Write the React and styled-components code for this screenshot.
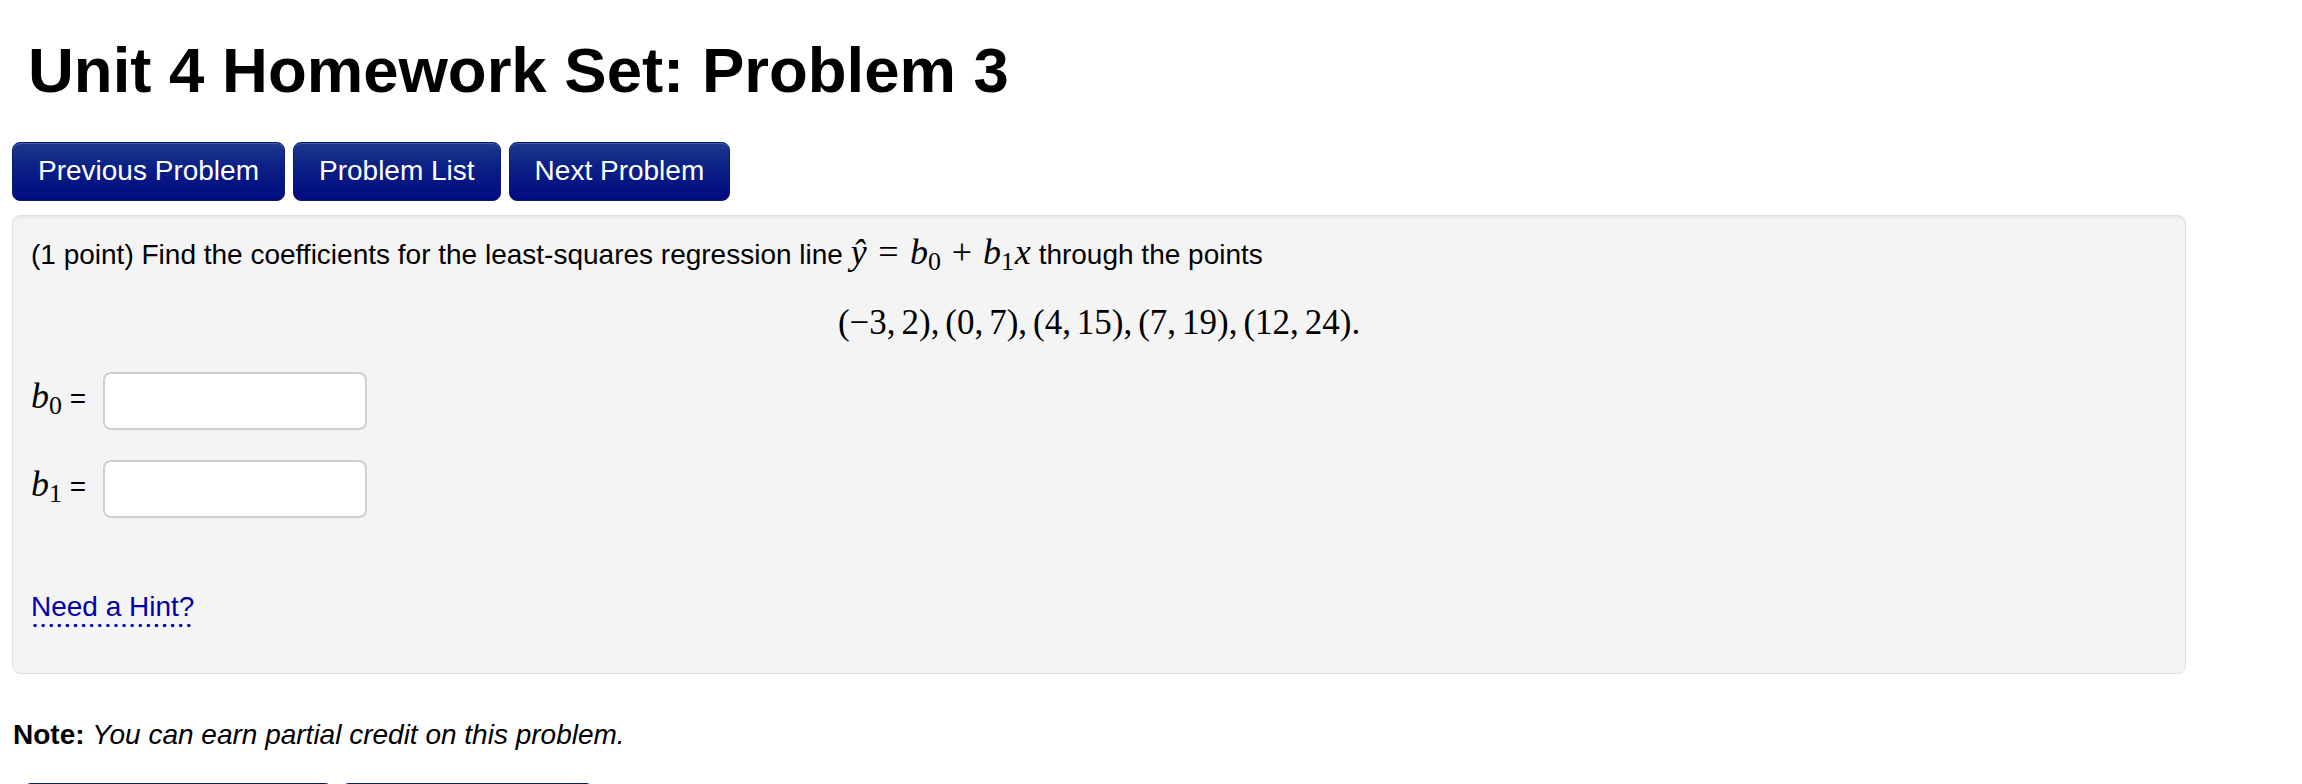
import React from "react";
import styled, { createGlobalStyle } from "styled-components";

const GlobalStyle = createGlobalStyle`
  html, body {
    margin: 0;
    padding: 0;
    background: #ffffff;
  }
  body {
    font-family: "Liberation Sans", Helvetica, Arial, sans-serif;
    color: #000000;
  }
`;

const Page = styled.div`
  width: 2174px;
  margin-left: 12px;
`;

const Title = styled.h1`
  margin: 0;
  padding: 38px 0 0 16px;
  font-size: 63.5px;
  line-height: 64px;
  font-weight: bold;
`;

const ButtonBar = styled.div`
  display: flex;
  gap: 8px;
  margin-top: ${(p) => p.$top}px;
  margin-left: ${(p) => p.$left || 0}px;
`;

const NavButton = styled.button`
  font-family: "Liberation Sans", Helvetica, Arial, sans-serif;
  font-size: 28px;
  line-height: 40px;
  padding: 8px 25px 9px;
  border: 1px solid #0b1a6e;
  border-radius: 8px;
  color: #ffffff;
  background: linear-gradient(to bottom, #1d3a8e 0%, #0c2186 40%, #000a80 100%);
  box-shadow: inset 0 1px 0 rgba(255, 255, 255, 0.18);
  cursor: pointer;
`;

const Well = styled.div`
  margin-top: 14px;
  padding: 19px 18px;
  background: #f4f4f4;
  border: 1px solid #e0e0e0;
  border-radius: 8px;
  box-shadow: inset 0 2px 2px rgba(0, 0, 0, 0.05);
  font-size: 28px;
  line-height: 40px;
`;

const Statement = styled.div`
  white-space: nowrap;
  height: 40px;
`;

const Math = styled.span`
  font-family: "Liberation Serif", "Times New Roman", serif;
  font-size: 36px;
  line-height: 0.8;
`;

const Var = styled.span`
  font-style: italic;
`;

const Op = styled.span`
  margin: 0 ${(p) => p.$gap || 0.3}em;
`;

const Sub = styled.span`
  font-size: 0.72em;
  vertical-align: -0.22em;
  line-height: 0.8;
  margin-right: ${(p) => p.$after || 0}em;
`;

const DisplayMath = styled.div`
  margin-top: 24px;
  font-family: "Liberation Serif", "Times New Roman", serif;
  font-size: 35px;
  line-height: 48px;
  text-align: center;
`;

const Comma = styled.span`
  margin-right: 0.17em;
`;

const AnswerRow = styled.div`
  display: flex;
  align-items: center;
  margin-top: ${(p) => p.$top}px;
  height: 58px;
`;

const Label = styled.span`
  padding-bottom: 5px;
  line-height: 40px;
  white-space: nowrap;
`;

const AnswerInput = styled.input`
  box-sizing: border-box;
  width: 264px;
  height: 58px;
  margin-left: 17px;
  padding: 0 10px;
  border: 2px solid #cfcfcf;
  border-radius: 8px;
  background: #ffffff;
  font-size: 28px;
  outline: none;
`;

const Hint = styled.div`
  margin-top: 69px;
  margin-bottom: 27px;
  height: 40px;
`;

const HintLink = styled.a`
  color: #0000a8;
  text-decoration: none;
  padding-bottom: 6px;
  background-image: radial-gradient(circle, #0000a8 1.6px, transparent 2px);
  background-size: 8.1px 5px;
  background-repeat: repeat-x;
  background-position: 0 100%;
  cursor: pointer;
`;

const Note = styled.div`
  margin-top: 41px;
  font-size: 28px;
  line-height: 40px;
  padding-left: 1px;
  em {
    font-style: italic;
  }
`;

const points = [
  ["\u22123", "2"],
  ["0", "7"],
  ["4", "15"],
  ["7", "19"],
  ["12", "24"],
];

function Point({ a, b, last }) {
  return (
    <>
      (<Comma>{a},</Comma>{b})
      {last ? "." : <Comma>,</Comma>}
    </>
  );
}

function Coef({ n }) {
  return (
    <AnswerRow $top={n === 0 ? 25 : 30}>
      <Label>
        <Math>
          <Var>b</Var>
          <Sub>{n}</Sub>
        </Math>{" "}
        =
      </Label>
      <AnswerInput type="text" aria-label={`b${n}`} />
    </AnswerRow>
  );
}

export default function App() {
  return (
    <>
      <GlobalStyle />
      <Page>
        <Title>Unit 4 Homework Set: Problem 3</Title>
        <ButtonBar $top={40}>
          <NavButton>Previous Problem</NavButton>
          <NavButton>Problem List</NavButton>
          <NavButton>Next Problem</NavButton>
        </ButtonBar>
        <Well>
          <Statement>
            (1 point) Find the coefficients for the least-squares regression line{" "}
            <Math>
              <Var>ŷ</Var>
              <Op $gap={0.32}>=</Op>
              <Var>b</Var>
              <Sub>0</Sub>
              <Op>+</Op>
              <Var>b</Var>
              <Sub $after={0.04}>1</Sub>
              <Var>x</Var>
            </Math>{" "}
            through the points
          </Statement>
          <DisplayMath>
            {points.map(([a, b], i) => (
              <Point key={i} a={a} b={b} last={i === points.length - 1} />
            ))}
          </DisplayMath>
          <Coef n={0} />
          <Coef n={1} />
          <Hint>
            <HintLink>Need a Hint?</HintLink>
          </Hint>
        </Well>
        <Note>
          <b>Note:</b> <em>You can earn partial credit on this problem.</em>
        </Note>
        <ButtonBar $top={28} $left={11}>
          <NavButton>Preview My Answers</NavButton>
          <NavButton>Submit Answers</NavButton>
        </ButtonBar>
      </Page>
    </>
  );
}
